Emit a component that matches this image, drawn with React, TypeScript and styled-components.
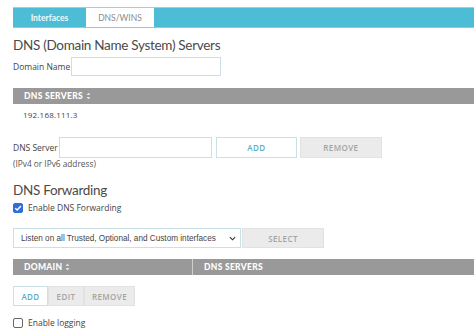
import React from "react";
import styled, { createGlobalStyle } from "styled-components";

const Global = createGlobalStyle`
  html, body { margin: 0; padding: 0; background: #fff; }
  body { font-family: "Open Sans", "Liberation Sans", sans-serif; color: #444; overflow: hidden; }
  * { box-sizing: border-box; }
`;

const Page = styled.div`
  width: 474px;
  height: 335px;
  padding: 7px 0 0 13px;
  display: flex;
  flex-direction: column;
`;

const TabBar = styled.div`
  height: 21px;
  background: #4cbdd5;
  border-top: 1px solid #8fd6e4;
  border-bottom: 1px solid #7fd0e0;
  display: flex;
`;

const Tab = styled.div<{ $active?: boolean }>`
  height: 100%;
  width: ${(p) => (p.$active ? 68 : 73)}px;
  display: flex;
  align-items: center;
  justify-content: center;
  font-family: "Lato", "Open Sans", sans-serif;
  font-size: 8.5px;
  font-weight: ${(p) => (p.$active ? 400 : 700)};
  color: ${(p) => (p.$active ? "#8c8c8c" : "#eefafd")};
  background: ${(p) => (p.$active ? "#fff" : "transparent")};
`;

const Heading = styled.h2<{ $top: number }>`
  margin: ${(p) => p.$top}px 0 0;
  font-family: "Lato", "Open Sans", sans-serif;
  font-weight: 400;
  font-size: 13.5px;
  line-height: 20px;
  color: #4a4a4a;
  letter-spacing: -0.3px;
`;

const Row = styled.div<{ $top: number; $h?: number }>`
  margin-top: ${(p) => p.$top}px;
  height: ${(p) => p.$h ?? 20}px;
  display: flex;
  align-items: center;
`;

const Label = styled.span`
  font-size: 8.5px;
  color: #444;
  margin-right: 1px;
  white-space: nowrap;
`;

const TextInput = styled.div<{ $w: number }>`
  width: ${(p) => p.$w}px;
  height: 100%;
  border: 1px solid #c8e0e6;
  background: #fff;
`;

const TableHead = styled.div<{ $top: number }>`
  margin-top: ${(p) => p.$top}px;
  height: 16px;
  background: #999999;
  display: flex;
  align-items: stretch;
`;

const HeadCell = styled.div<{ $w?: number }>`
  ${(p) => (p.$w ? `width: ${p.$w}px;` : "flex: 1;")}
  display: flex;
  align-items: center;
  padding-left: 11px;
  font-family: "Lato", "Open Sans", sans-serif;
  font-weight: 900;
  font-size: 8.5px;
  color: #fff;
  letter-spacing: 0.3px;
  & + & {
    border-left: 1px solid #d0d0d0;
  }
`;

const SortIcon = styled.svg`
  margin-left: 3px;
`;

const Sort = () => (
  <SortIcon width="5" height="8" viewBox="0 0 5 8">
    <path d="M2.5 0.5 L4.5 3 L0.5 3 Z M2.5 7.5 L4.5 5 L0.5 5 Z" fill="#e2e2e2" />
  </SortIcon>
);

const Cell = styled.div`
  height: 20px;
  display: flex;
  align-items: center;
  padding-left: 10px;
  font-size: 8px;
  color: #444;
  letter-spacing: 0.2px;
`;

const Button = styled.div<{ $w: number; $primary?: boolean }>`
  width: ${(p) => p.$w}px;
  height: 100%;
  display: flex;
  align-items: center;
  justify-content: center;
  font-size: 8px;
  font-weight: 600;
  letter-spacing: 0.4px;
  color: ${(p) => (p.$primary ? "#5aaec4" : "#a4a4a4")};
  background: ${(p) => (p.$primary ? "#fff" : "#ebebeb")};
  border: 1px solid ${(p) => (p.$primary ? "#c8e0e6" : "#e2e2e2")};
`;

const Hint = styled.div`
  font-size: 8.3px;
  line-height: 11px;
  color: #555;
`;

const CheckRow = styled.label<{ $top: number }>`
  margin-top: ${(p) => p.$top}px;
  height: 13px;
  display: flex;
  align-items: center;
  font-size: 8.5px;
  color: #444;
  gap: 5px;
`;

const Box = styled.span<{ $checked?: boolean }>`
  width: 10px;
  height: 10px;
  border-radius: 2px;
  border: 1px solid ${(p) => (p.$checked ? "#2f6fd6" : "#666")};
  background: ${(p) => (p.$checked ? "#2f6fd6" : "#fff")};
  display: inline-flex;
  align-items: center;
  justify-content: center;
`;

const Select = styled.div`
  width: 228px;
  height: 100%;
  border: 1px solid #c8e0e6;
  display: flex;
  align-items: center;
  justify-content: space-between;
  padding: 0 4px 0 7px;
  font-family: "Liberation Sans", Arial, sans-serif;
  font-size: 8.2px;
  color: #444;
`;

const Group = styled.div<{ $gap?: number; $left?: number }>`
  display: flex;
  height: 100%;
  gap: ${(p) => p.$gap ?? 0}px;
  margin-left: ${(p) => p.$left ?? 0}px;
`;

export default function App() {
  return (
    <>
      <Global />
      <Page>
        <TabBar>
          <Tab>Interfaces</Tab>
          <Tab $active>DNS/WINS</Tab>
        </TabBar>

        <Heading $top={7}>DNS (Domain Name System) Servers</Heading>
        <Row $top={2} $h={19}>
          <Label>Domain Name</Label>
          <TextInput $w={150} />
        </Row>

        <TableHead $top={12}>
          <HeadCell>
            DNS SERVERS
            <Sort />
          </HeadCell>
        </TableHead>
        <Cell>192.168.111.3</Cell>

        <Row $top={13} $h={21}>
          <Label>DNS Server</Label>
          <TextInput $w={153} />
          <Group $left={4} $gap={3}>
            <Button $w={81} $primary>ADD</Button>
            <Button $w={82}>REMOVE</Button>
          </Group>
        </Row>
        <Hint>(IPv4 or IPv6 address)</Hint>

        <Heading $top={11}>DNS Forwarding</Heading>
        <CheckRow $top={1}>
          <Box $checked>
            <svg width="8" height="8" viewBox="0 0 10 10">
              <path d="M1.5 5.2 L4 7.6 L8.6 2.4" fill="none" stroke="#fff" strokeWidth="1.8" />
            </svg>
          </Box>
          Enable DNS Forwarding
        </CheckRow>

        <Row $top={14} $h={20}>
          <Select>
            <span>Listen on all Trusted, Optional, and Custom interfaces</span>
            <svg width="7" height="5" viewBox="0 0 8 5">
              <path d="M1 1 L4 4 L7 1" fill="none" stroke="#333" strokeWidth="1.3" />
            </svg>
          </Select>
          <Group $left={1}>
            <Button $w={82}>SELECT</Button>
          </Group>
        </Row>

        <TableHead $top={11}>
          <HeadCell $w={179}>
            DOMAIN
            <Sort />
          </HeadCell>
          <HeadCell>DNS SERVERS</HeadCell>
        </TableHead>

        <Row $top={11} $h={20}>
          <Group>
            <Button $w={35} $primary>ADD</Button>
            <Button $w={36}>EDIT</Button>
            <Button $w={51}>REMOVE</Button>
          </Group>
        </Row>

        <CheckRow $top={10}>
          <Box />
          Enable logging
        </CheckRow>
      </Page>
    </>
  );
}
